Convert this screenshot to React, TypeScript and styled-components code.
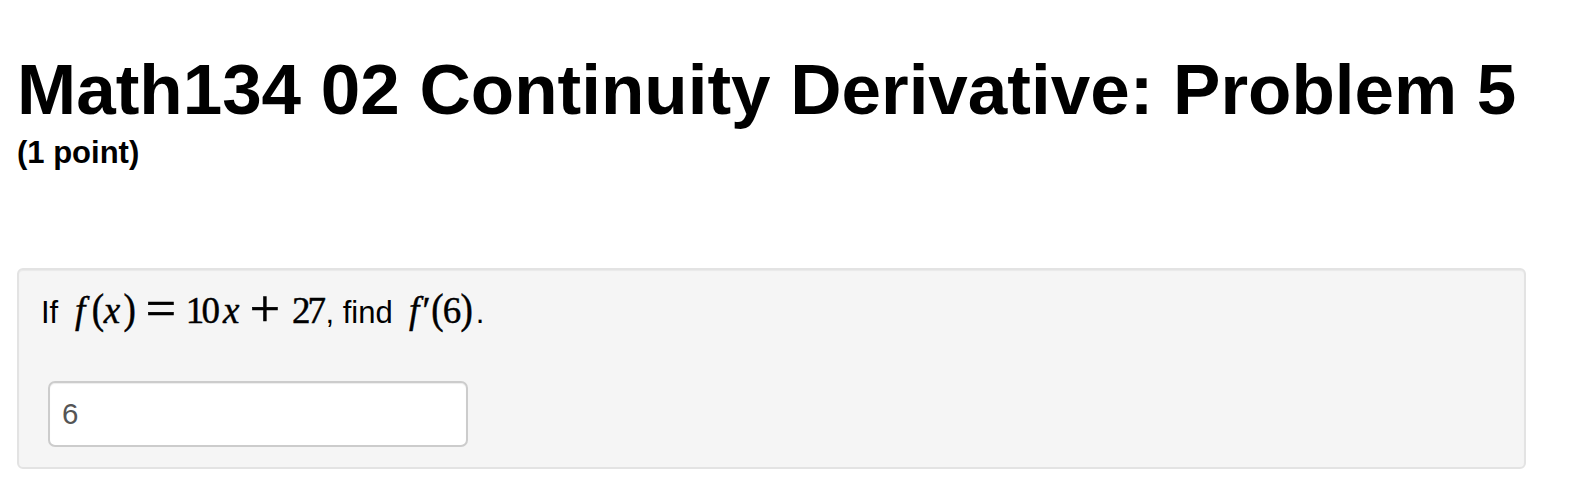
import React from "react";
import styled, { createGlobalStyle } from "styled-components";

const Global = createGlobalStyle`
  html, body { margin: 0; padding: 0; background: #ffffff; }
  body { font-family: "Liberation Sans", Arial, sans-serif; color: #000; }
`;

const Page = styled.div`
  padding: 0 17px;
  width: 1509px;
`;

const Title = styled.h1`
  margin: 0;
  padding-top: 50px;
  font-family: "Liberation Sans", Arial, sans-serif;
  font-weight: 700;
  font-size: 71px;
  line-height: 80px;
`;

const Points = styled.div`
  margin-top: 5px;
  font-weight: 700;
  font-size: 31px;
  line-height: 36px;
`;

const Well = styled.div`
  margin-top: 97px;
  height: 201px;
  box-sizing: border-box;
  background: #f5f5f5;
  border: 2px solid #e3e3e3;
  border-radius: 6px;
  box-shadow: inset 0 1px 1px rgba(0, 0, 0, 0.05);
  padding: 21px 24px 0 22px;
`;

const Question = styled.p`
  margin: 0;
  font-size: 31px;
  line-height: 44px;
  color: #000;
  white-space: nowrap;
`;

const Glyph = styled.span<{
  $w: number;
  $ml: number;
  $italic?: boolean;
  $sx?: number;
  $sy?: number;
  $oy?: number;
}>`
  display: inline-block;
  width: ${(p) => p.$w}px;
  margin-left: ${(p) => p.$ml}px;
  text-align: center;
  font-family: "Liberation Serif", "Times New Roman", serif;
  font-size: 37px;
  line-height: 36px;
  -webkit-text-stroke: 0.45px #000;
  font-style: ${(p) => (p.$italic ? "italic" : "normal")};
  transform: scale(${(p) => p.$sx ?? 1}, ${(p) => p.$sy ?? 1});
  transform-origin: 50% ${(p) => p.$oy ?? 50}%;
`;

const Words = styled.span<{ $ml?: number }>`
  display: inline-block;
  margin-left: ${(p) => p.$ml ?? 0}px;
  white-space: pre;
`;

const Answer = styled.input`
  display: block;
  margin: 46px 0 0 7px;
  width: 420px;
  height: 66px;
  box-sizing: border-box;
  border: 2px solid #cccccc;
  border-radius: 7px;
  background: #ffffff;
  box-shadow: inset 0 1px 1px rgba(0, 0, 0, 0.075);
  padding: 0 12px;
  font-family: "Liberation Sans", Arial, sans-serif;
  font-size: 29.5px;
  color: #555555;
  outline: none;
`;

type G = {
  t: string;
  w: number;
  ml: number;
  it?: boolean;
  sx?: number;
  sy?: number;
  oy?: number;
};

const paren = { sy: 1.14, oy: 80 };
const op = { sx: 1.45, sy: 1.4, oy: 61 };

const lhs: G[] = [
  { t: "f", w: 14, ml: 15, it: true },
  { t: "(", w: 12, ml: 4.6, ...paren },
  { t: "x", w: 16, ml: 0, it: true },
  { t: ")", w: 12, ml: 3.6, ...paren },
  { t: "=", w: 22, ml: 14.2, ...op },
  { t: "1", w: 18, ml: 14.2 },
  { t: "0", w: 18, ml: -2.4 },
  { t: "x", w: 16, ml: 3.6, it: true },
  { t: "+", w: 22, ml: 14.7, ...op },
  { t: "2", w: 18, ml: 16.2 },
  { t: "7", w: 18, ml: -2.4 },
];

const rhs: G[] = [
  { t: "f", w: 14, ml: 14.4, it: true },
  { t: "′", w: 8, ml: 1.5 },
  { t: "(", w: 12, ml: 0.6, ...paren },
  { t: "6", w: 18, ml: -0.4 },
  { t: ")", w: 12, ml: -0.4, ...paren },
];

const renderMath = (gs: G[]) =>
  gs.map((g, i) => (
    <Glyph
      key={i}
      $w={g.w}
      $ml={g.ml}
      $italic={g.it}
      $sx={g.sx}
      $sy={g.sy}
      $oy={g.oy}
    >
      {g.t}
    </Glyph>
  ));

export default function App() {
  return (
    <>
      <Global />
      <Page>
        <Title>Math134 02 Continuity Derivative: Problem 5</Title>
        <Points>(1 point)</Points>
        <Well>
          <Question>
            <Words>If</Words>
            {renderMath(lhs)}
            <Words>, find</Words>
            {renderMath(rhs)}
            <Words $ml={3.3}>.</Words>
          </Question>
          <Answer defaultValue="6" readOnly />
        </Well>
      </Page>
    </>
  );
}
